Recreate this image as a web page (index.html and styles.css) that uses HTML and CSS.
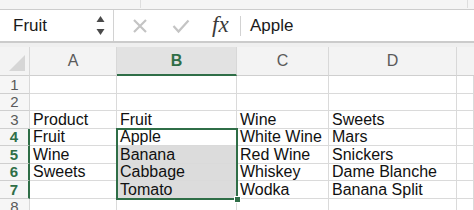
FILE: index.html
```html
<!DOCTYPE html>
<html lang="en">
<head>
    <meta charset="UTF-8">
    <title>Sheet</title>
    <link rel="stylesheet" href="styles.css">
</head>
<body>
    <div class="ribbon-edge">
        <span class="ribbon-line l1"></span>
        <span class="ribbon-line l2"></span>
    </div>
    <div class="formula-bar">
        <div class="name-box">
            <span class="name-text">Fruit</span>
            <span class="spinner">
                <svg width="9" height="24" viewBox="0 0 9 24">
                    <path d="M4.5 2 L8.5 8 L0.5 8 Z" fill="#4a4a4a"/>
                    <path d="M0.5 15 L8.5 15 L4.5 21 Z" fill="#4a4a4a"/>
                </svg>
            </span>
        </div>
        <div class="fx-tools">
            <svg class="tool" width="16" height="16" viewBox="0 0 16 16">
                <path d="M2 2 L14 14 M14 2 L2 14" stroke="#c4c4c4" stroke-width="2.2" fill="none"/>
            </svg>
            <svg class="tool" width="18" height="16" viewBox="0 0 18 16">
                <path d="M1.5 8 L6.5 13.5 L16.5 2.5" stroke="#c4c4c4" stroke-width="2.2" fill="none"/>
            </svg>
            <span class="fx">fx</span>
        </div>
        <div class="formula-text">Apple</div>
    </div>
    <div class="gap"></div>

    <div class="sheet-wrap">
        <div class="sheet">
            <div class="corner"><span class="corner-tri"></span></div>
            <div class="col-head">A</div>
            <div class="col-head active">B</div>
            <div class="col-head">C</div>
            <div class="col-head">D</div>
            <div class="col-head last"></div>

            <div class="row-head">1</div><div class="cell"></div><div class="cell"></div><div class="cell"></div><div class="cell"></div><div class="cell"></div>
            <div class="row-head">2</div><div class="cell"></div><div class="cell"></div><div class="cell"></div><div class="cell"></div><div class="cell"></div>
            <div class="row-head">3</div><div class="cell">Product</div><div class="cell">Fruit</div><div class="cell">Wine</div><div class="cell">Sweets</div><div class="cell"></div>
            <div class="row-head sel">4</div><div class="cell">Fruit</div><div class="cell">Apple</div><div class="cell">White Wine</div><div class="cell">Mars</div><div class="cell"></div>
            <div class="row-head sel">5</div><div class="cell">Wine</div><div class="cell shade">Banana</div><div class="cell">Red Wine</div><div class="cell">Snickers</div><div class="cell"></div>
            <div class="row-head sel">6</div><div class="cell">Sweets</div><div class="cell shade">Cabbage</div><div class="cell">Whiskey</div><div class="cell">Dame Blanche</div><div class="cell"></div>
            <div class="row-head sel">7</div><div class="cell"></div><div class="cell shade">Tomato</div><div class="cell">Wodka</div><div class="cell">Banana Split</div><div class="cell"></div>
            <div class="row-head">8</div><div class="cell"></div><div class="cell"></div><div class="cell"></div><div class="cell"></div><div class="cell"></div>
        </div>
        <div class="selection"><span class="handle"></span></div>
    </div>
</body>
</html>
```

FILE: styles.css
```css
* {
    margin: 0;
    padding: 0;
    box-sizing: border-box;
}

body {
    font-family: "Liberation Sans", Arial, sans-serif;
    background-color: #ffffff;
    width: 474px;
    height: 210px;
    overflow: hidden;
}

.ribbon-edge {
    position: relative;
    height: 10px;
    background-color: #f5f5f5;
    border-bottom: 1px solid #cdcdcd;
}

.ribbon-line {
    position: absolute;
    top: 0;
    width: 1px;
    height: 8px;
    background-color: #dedede;
}

.ribbon-line.l1 { left: 140px; }
.ribbon-line.l2 { left: 467px; }

.formula-bar {
    display: flex;
    align-items: center;
    height: 33px;
    background-color: #ffffff;
    border-bottom: 2px solid #cbcbcb;
}

.name-box {
    display: flex;
    align-items: center;
    justify-content: space-between;
    width: 114px;
    height: 100%;
    padding: 0 8px 0 13px;
    border-right: 1px solid #d2d2d2;
}

.name-text {
    font-size: 17px;
    color: #1a1a1a;
}

.spinner {
    display: flex;
}

.fx-tools {
    display: flex;
    align-items: center;
    width: 126px;
    height: 100%;
    padding-left: 18px;
}

.tool {
    margin-right: 24px;
}

.tool + .tool {
    margin-right: 22px;
}

.fx {
    font-family: "Liberation Serif", "Times New Roman", serif;
    font-style: italic;
    font-size: 23px;
    color: #3a3a3a;
    padding-bottom: 2px;
}

.formula-text {
    display: flex;
    align-items: center;
    height: 20px;
    padding-left: 9px;
    border-left: 1px solid #d2d2d2;
    font-size: 17px;
    color: #1a1a1a;
}

.gap {
    height: 4px;
    background-color: #efefef;
}

.sheet-wrap {
    position: relative;
}

.sheet {
    display: grid;
    grid-template-columns: 30px 87px 120px 92px 128px 1fr;
    grid-template-rows: 29px repeat(8, 17.5px);
    font-size: 16px;
    color: #111;
}

.corner,
.col-head,
.row-head {
    background-color: #f3f3f3;
    border-right: 1px solid #d8d8d8;
    border-bottom: 1px solid #cfcfcf;
    color: #5a5a5a;
}

.corner {
    position: relative;
}

.corner-tri {
    position: absolute;
    right: 4px;
    bottom: 4px;
    width: 0;
    height: 0;
    border-left: 16px solid transparent;
    border-bottom: 16px solid #d6d6d6;
}

.col-head {
    display: flex;
    align-items: center;
    justify-content: center;
    font-size: 16px;
}

.col-head.active {
    background-color: #e2e2e2;
    border-bottom: 2px solid #2f6e47;
    color: #2f6e47;
    font-weight: bold;
}

.col-head.last {
    border-right: none;
}

.row-head {
    display: flex;
    align-items: center;
    justify-content: center;
    font-size: 15px;
    background-color: #f6f6f6;
}

.row-head.sel {
    color: #2f6e47;
    font-weight: bold;
    border-right: 2px solid #2f6e47;
}

.cell {
    display: flex;
    align-items: flex-end;
    padding: 0 0 0 3px;
    line-height: 17px;
    border-right: 1px solid #dadada;
    border-bottom: 1px solid #dadada;
    white-space: nowrap;
    overflow: hidden;
}

.cell.shade {
    background-color: #dcdcdc;
}

.selection {
    position: absolute;
    left: 116px;
    top: 81px;
    width: 122px;
    height: 72px;
    border: 2px solid #2f6e47;
    pointer-events: none;
}

.handle {
    position: absolute;
    right: -5px;
    bottom: -5px;
    width: 7px;
    height: 7px;
    background-color: #2f6e47;
    border: 1px solid #ffffff;
}
```
